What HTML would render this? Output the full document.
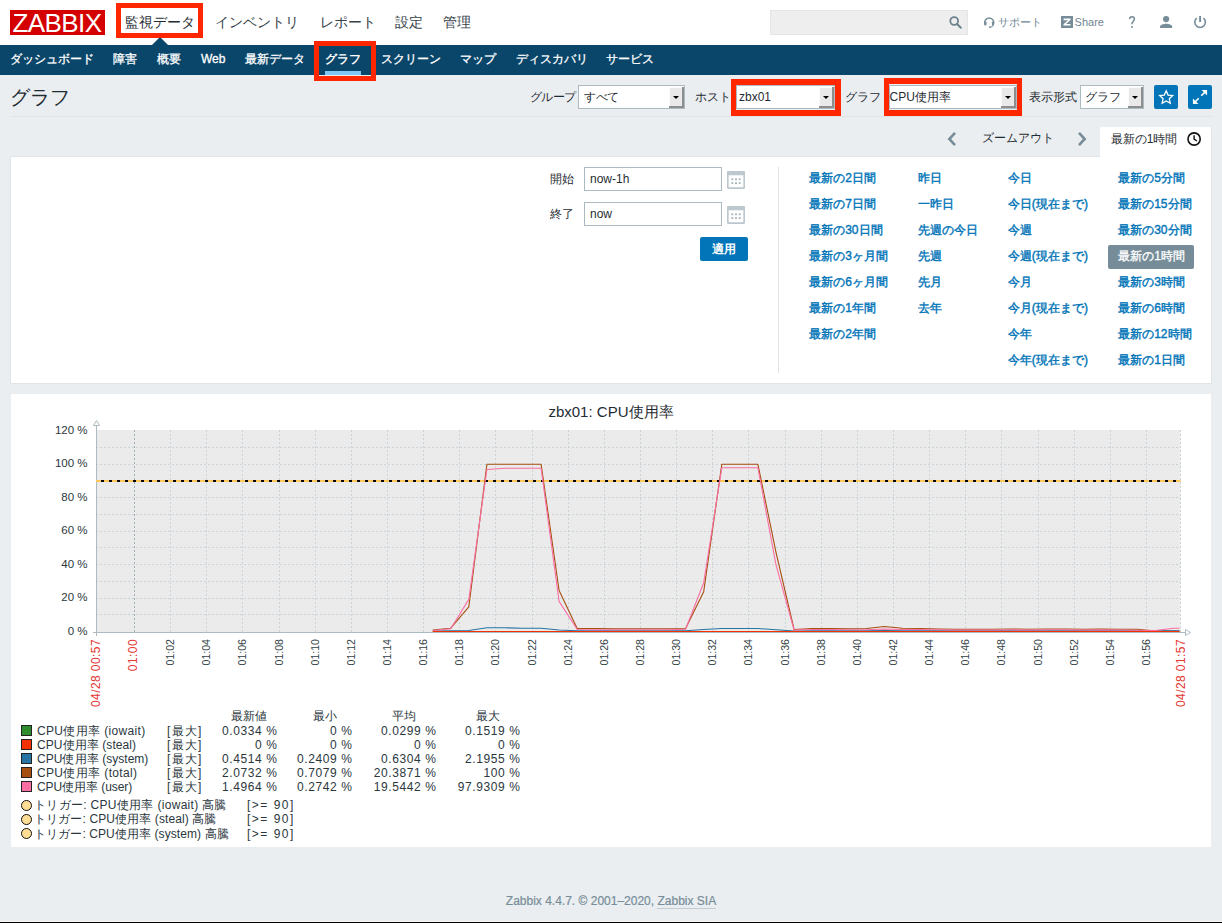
<!DOCTYPE html>
<html lang="ja"><head><meta charset="utf-8"><title>Zabbix</title>
<style>
html,body{margin:0;padding:0;}
body{width:1222px;height:923px;overflow:hidden;background:#ebeef0;font-family:"Liberation Sans",sans-serif;position:relative;}
.t{position:absolute;white-space:nowrap;overflow:visible;font-family:"Liberation Sans",sans-serif;}
.a{position:absolute;}
.sel{position:absolute;background:#fff;border:1px solid #acbbc2;box-sizing:border-box;height:24px;}
.sel .btn{position:absolute;right:0;top:1px;bottom:0;width:15px;background:#e9e9e9;box-shadow:inset -2px -2px 0 #8e8e8e, inset 1px 1px 0 #fbfbfb;}
.sel .btn:after{content:"";position:absolute;left:3.5px;top:8.5px;border:3px solid transparent;border-top:3.5px solid #000;}
.red{position:absolute;border:4px solid #ff2600;box-sizing:border-box;}
.inp{position:absolute;background:#fff;border:1px solid #acbbc2;box-sizing:border-box;height:24px;width:138px;}
</style></head><body>

<div class="a" style="left:0;top:0;width:1222px;height:45px;background:#fff;"></div>
<div class="a" style="left:10px;top:10px;width:95px;height:25px;background:#d40000;"></div>
<div class="t" style="left:12.4px;top:9.7px;font-size:26px;line-height:27px;height:27px;color:#fff;letter-spacing:-0.55px;">ZABBIX</div>
<div class="t" style="left:125px;width:70.3px;text-align:justify;text-align-last:justify;top:12px;font-size:14px;line-height:20px;height:20px;color:#1f2c33;">監視データ</div>
<div class="t" style="left:215px;width:84.3px;text-align:justify;text-align-last:justify;top:12px;font-size:14px;line-height:20px;height:20px;color:#36424a;">インベントリ</div>
<div class="t" style="left:320px;width:56.3px;text-align:justify;text-align-last:justify;top:12px;font-size:14px;line-height:20px;height:20px;color:#36424a;">レポート</div>
<div class="t" style="left:395px;width:28.3px;text-align:justify;text-align-last:justify;top:12px;font-size:14px;line-height:20px;height:20px;color:#36424a;">設定</div>
<div class="t" style="left:443px;width:28.3px;text-align:justify;text-align-last:justify;top:12px;font-size:14px;line-height:20px;height:20px;color:#36424a;">管理</div>
<div class="a" style="left:770px;top:10px;width:198px;height:25px;background:#eeeeee;border:1px solid #e5e5e5;box-sizing:border-box;"></div>
<svg class="a" style="left:947px;top:14px" width="18" height="18" viewBox="0 0 18 18"><circle cx="7.2" cy="7" r="3.9" fill="none" stroke="#6c828e" stroke-width="1.8"/><path d="M10 10 L13.8 13.8" stroke="#6c828e" stroke-width="2" stroke-linecap="round"/></svg>
<svg class="a" style="left:982px;top:14px" width="16" height="16" viewBox="0 0 16 16"><path d="M3.1 10.6 A4.6 4.6 0 1 1 11.3 10.6" fill="none" stroke="#768d99" stroke-width="1.5"/><rect x="2.3" y="7.4" width="2.2" height="4.1" rx="0.9" fill="#768d99"/><rect x="9.9" y="7.4" width="2.2" height="4.1" rx="0.9" fill="#768d99"/><path d="M11.4 11 Q10.8 13.2 8.2 13.2" fill="none" stroke="#768d99" stroke-width="1"/><circle cx="7.9" cy="13.2" r="0.9" fill="#768d99"/></svg>
<div class="t" style="left:997.8px;width:44.3px;text-align:justify;text-align-last:justify;top:14px;font-size:11px;line-height:16px;height:16px;color:#6f8591;">サポート</div>
<svg class="a" style="left:1061px;top:16px" width="12" height="12" viewBox="0 0 12 12"><rect width="12" height="12" fill="#768d99"/><path d="M2.6 2.6 H9.5 V4 L5 8 H9.5 V9.6 H2.5 V8.2 L7 4.2 H2.6 Z" fill="#fff"/></svg>
<div class="t" style="left:1074.6px;top:14px;font-size:11px;line-height:16px;height:16px;color:#6f8591;">Share</div>
<svg class="a" style="left:1125px;top:13px" width="14" height="18" viewBox="0 0 14 18"><path d="M4.6 6.3 C4.6 4.4 5.9 3.7 7 3.7 C8.4 3.7 9.4 4.7 9.4 6 C9.4 8 6.9 8.6 6.9 11.3" fill="none" stroke="#768d99" stroke-width="1.5"/><circle cx="6.9" cy="13.9" r="1" fill="#768d99"/></svg>
<svg class="a" style="left:1157px;top:13px" width="18" height="18" viewBox="0 0 18 18"><circle cx="9.1" cy="6.1" r="3.1" fill="#768d99"/><path d="M3 14.9 V13.7 C3 11.8 6.5 10.8 9.1 10.8 C11.7 10.8 15.2 11.8 15.2 13.7 V14.9 Z" fill="#768d99"/></svg>
<svg class="a" style="left:1191px;top:13px" width="18" height="18" viewBox="0 0 18 18"><path d="M5.7 5.1 A5.3 5.3 0 1 0 12.5 5.1" fill="none" stroke="#768d99" stroke-width="1.6"/><path d="M9.1 3 V9" stroke="#768d99" stroke-width="1.9"/></svg>
<div class="a" style="left:0;top:45px;width:1222px;height:30px;background:#0a466a;"></div>
<div class="a" style="left:152px;top:37px;width:0;height:0;border-left:8px solid transparent;border-right:8px solid transparent;border-bottom:8px solid #0a466a;"></div>
<div class="t" style="left:10px;width:84.3px;text-align:justify;text-align-last:justify;top:50px;font-size:12px;line-height:18px;height:18px;color:#fff;-webkit-text-stroke:0.3px #fff;">ダッシュボード</div>
<div class="t" style="left:113px;width:24.3px;text-align:justify;text-align-last:justify;top:50px;font-size:12px;line-height:18px;height:18px;color:#fff;-webkit-text-stroke:0.3px #fff;">障害</div>
<div class="t" style="left:157px;width:24.3px;text-align:justify;text-align-last:justify;top:50px;font-size:12px;line-height:18px;height:18px;color:#fff;-webkit-text-stroke:0.3px #fff;">概要</div>
<div class="t" style="left:201px;top:50px;font-size:12px;line-height:18px;height:18px;color:#fff;-webkit-text-stroke:0.3px #fff;">Web</div>
<div class="t" style="left:245px;width:60.3px;text-align:justify;text-align-last:justify;top:50px;font-size:12px;line-height:18px;height:18px;color:#fff;-webkit-text-stroke:0.3px #fff;">最新データ</div>
<div class="t" style="left:325px;width:36.3px;text-align:justify;text-align-last:justify;top:50px;font-size:12px;line-height:18px;height:18px;color:#fff;font-weight:bold;">グラフ</div>
<div class="t" style="left:381px;width:60.3px;text-align:justify;text-align-last:justify;top:50px;font-size:12px;line-height:18px;height:18px;color:#fff;-webkit-text-stroke:0.3px #fff;">スクリーン</div>
<div class="t" style="left:460px;width:36.3px;text-align:justify;text-align-last:justify;top:50px;font-size:12px;line-height:18px;height:18px;color:#fff;-webkit-text-stroke:0.3px #fff;">マップ</div>
<div class="t" style="left:516px;width:72.3px;text-align:justify;text-align-last:justify;top:50px;font-size:12px;line-height:18px;height:18px;color:#fff;-webkit-text-stroke:0.3px #fff;">ディスカバリ</div>
<div class="t" style="left:606px;width:48.3px;text-align:justify;text-align-last:justify;top:50px;font-size:12px;line-height:18px;height:18px;color:#fff;-webkit-text-stroke:0.3px #fff;">サービス</div>
<div class="a" style="left:325px;top:71px;width:36px;height:4px;background:#7fc8f6;"></div>
<div class="t" style="left:10px;width:60.3px;text-align:justify;text-align-last:justify;top:82px;font-size:20.3px;line-height:30px;height:30px;color:#1f2c33;">グラフ</div>
<div class="a" style="left:10px;top:116px;width:1202px;height:1px;background:#dfe4e7;"></div>
<div class="t" style="left:530px;width:45.1px;text-align:justify;text-align-last:justify;top:88px;font-size:12px;line-height:18px;height:18px;color:#1f2c33;letter-spacing:-0.8px;">グループ</div>
<div class="sel" style="left:578px;top:85px;width:107px;"><div class="btn"></div></div>
<div class="t" style="left:584px;width:34.5px;text-align:justify;text-align-last:justify;top:88px;font-size:12px;line-height:18px;height:18px;color:#1f2c33;letter-spacing:-0.6px;">すべて</div>
<div class="t" style="left:695px;width:36.3px;text-align:justify;text-align-last:justify;top:88px;font-size:12px;line-height:18px;height:18px;color:#1f2c33;">ホスト</div>
<div class="sel" style="left:736px;top:85px;width:99px;"><div class="btn"></div></div>
<div class="t" style="left:739px;top:88px;font-size:12px;line-height:18px;height:18px;color:#1f2c33;">zbx01</div>
<div class="t" style="left:845px;width:36.3px;text-align:justify;text-align-last:justify;top:88px;font-size:12px;line-height:18px;height:18px;color:#1f2c33;">グラフ</div>
<div class="sel" style="left:889px;top:85px;width:128px;"><div class="btn"></div></div>
<div class="t" style="left:889.5px;width:61.6px;text-align:justify;text-align-last:justify;top:88px;font-size:12px;line-height:18px;height:18px;color:#1f2c33;">CPU使用率</div>
<div class="t" style="left:1029px;width:48.3px;text-align:justify;text-align-last:justify;top:88px;font-size:12px;line-height:18px;height:18px;color:#1f2c33;">表示形式</div>
<div class="sel" style="left:1080px;top:85px;width:64px;"><div class="btn"></div></div>
<div class="t" style="left:1085px;width:36.3px;text-align:justify;text-align-last:justify;top:88px;font-size:12px;line-height:18px;height:18px;color:#1f2c33;">グラフ</div>
<div class="a" style="left:1154px;top:85px;width:24px;height:24px;background:#0275b8;border-radius:2px;"></div>
<svg class="a" style="left:1154px;top:85px" width="24" height="24" viewBox="0 0 24 24"><path d="M12.20 5.80 L14.11 10.07 L18.76 10.57 L15.29 13.70 L16.26 18.28 L12.20 15.95 L8.14 18.28 L9.11 13.70 L5.64 10.57 L10.29 10.07 Z" fill="none" stroke="#fff" stroke-width="1.25" stroke-linejoin="miter"/></svg>
<div class="a" style="left:1188px;top:85px;width:24px;height:24px;background:#0275b8;border-radius:2px;"></div>
<svg class="a" style="left:1188px;top:85px" width="24" height="24" viewBox="0 0 24 24"><path d="M13.6 5 H19.1 V10.5 Z M10.4 19.1 H4.9 V13.6 Z" fill="#fff"/><path d="M17.2 6.9 L13.3 10.8 M6.8 17.2 L10.7 13.3" stroke="#fff" stroke-width="1.6"/></svg>
<div class="a" style="left:1100px;top:127px;width:112px;height:30px;background:#fff;border-right:1px solid #dfe4e7;border-radius:2px 2px 0 0;box-sizing:border-box;"></div>
<div class="t" style="left:1110.5px;width:67.0px;text-align:justify;text-align-last:justify;top:130px;font-size:12px;line-height:18px;height:18px;color:#1f2c33;">最新の1時間</div>
<svg class="a" style="left:1186px;top:131px" width="16" height="16" viewBox="0 0 16 16"><circle cx="8.1" cy="8" r="6.1" fill="none" stroke="#111" stroke-width="1.6"/><path d="M8.1 4.2 V8.2 L11 10" fill="none" stroke="#111" stroke-width="1.4"/></svg>
<div class="t" style="left:982px;width:72.3px;text-align:justify;text-align-last:justify;top:129px;font-size:12px;line-height:18px;height:18px;color:#1f2c33;">ズームアウト</div>
<svg class="a" style="left:946px;top:131px" width="12" height="16" viewBox="0 0 12 16"><path d="M9 1.8 L3.3 8 L9 14.2" fill="none" stroke="#768d99" stroke-width="2.6"/></svg>
<svg class="a" style="left:1076px;top:131px" width="12" height="16" viewBox="0 0 12 16"><path d="M3 1.8 L8.7 8 L3 14.2" fill="none" stroke="#768d99" stroke-width="2.6"/></svg>
<div class="a" style="left:10px;top:156px;width:1202px;height:228px;background:#fff;border:1px solid #dfe4e7;box-sizing:border-box;"></div>
<div class="a" style="left:1100px;top:155px;width:111px;height:3px;background:#fff;"></div>
<div class="t" style="left:550px;width:24.3px;text-align:justify;text-align-last:justify;top:170px;font-size:12px;line-height:18px;height:18px;color:#1f2c33;">開始</div>
<div class="t" style="left:550px;width:24.3px;text-align:justify;text-align-last:justify;top:205px;font-size:12px;line-height:18px;height:18px;color:#1f2c33;">終了</div>
<div class="inp" style="left:584px;top:167px;"></div>
<div class="inp" style="left:584px;top:202px;"></div>
<div class="t" style="left:590px;top:170px;font-size:12px;line-height:18px;height:18px;color:#1f2c33;">now-1h</div>
<div class="t" style="left:590px;top:205px;font-size:12px;line-height:18px;height:18px;color:#1f2c33;">now</div>
<svg class="a" style="left:727px;top:171px" width="18" height="18" viewBox="0 0 18 18"><rect x="0.75" y="0.75" width="16.5" height="16.5" rx="1.2" fill="#fff" stroke="#bcc8ce" stroke-width="1.8"/><rect x="0.3" y="0.3" width="17.4" height="4" rx="1" fill="#bcc8ce"/><rect x="4.35" y="7.3500000000000005" width="1.9" height="1.9" fill="#a9b7bf"/><rect x="8.05" y="7.3500000000000005" width="1.9" height="1.9" fill="#a9b7bf"/><rect x="11.75" y="7.3500000000000005" width="1.9" height="1.9" fill="#a9b7bf"/><rect x="4.35" y="11.15" width="1.9" height="1.9" fill="#a9b7bf"/><rect x="8.05" y="11.15" width="1.9" height="1.9" fill="#a9b7bf"/><rect x="11.75" y="11.15" width="1.9" height="1.9" fill="#a9b7bf"/></svg>
<svg class="a" style="left:727px;top:206px" width="18" height="18" viewBox="0 0 18 18"><rect x="0.75" y="0.75" width="16.5" height="16.5" rx="1.2" fill="#fff" stroke="#bcc8ce" stroke-width="1.8"/><rect x="0.3" y="0.3" width="17.4" height="4" rx="1" fill="#bcc8ce"/><rect x="4.35" y="7.3500000000000005" width="1.9" height="1.9" fill="#a9b7bf"/><rect x="8.05" y="7.3500000000000005" width="1.9" height="1.9" fill="#a9b7bf"/><rect x="11.75" y="7.3500000000000005" width="1.9" height="1.9" fill="#a9b7bf"/><rect x="4.35" y="11.15" width="1.9" height="1.9" fill="#a9b7bf"/><rect x="8.05" y="11.15" width="1.9" height="1.9" fill="#a9b7bf"/><rect x="11.75" y="11.15" width="1.9" height="1.9" fill="#a9b7bf"/></svg>
<div class="a" style="left:700px;top:237px;width:48px;height:24px;background:#0275b8;border-radius:2px;"></div>
<div class="t" style="left:711.9px;width:24.3px;text-align:justify;text-align-last:justify;top:240px;font-size:12px;line-height:18px;height:18px;color:#fff;font-weight:bold;">適用</div>
<div class="a" style="left:778px;top:167px;width:1px;height:206px;background:#dfe4e7;"></div>
<div class="t" style="left:809px;width:67.0px;text-align:justify;text-align-last:justify;top:169px;font-size:12px;line-height:18px;height:18px;color:#0275b8;-webkit-text-stroke:0.4px #0275b8;">最新の2日間</div>
<div class="t" style="left:809px;width:67.0px;text-align:justify;text-align-last:justify;top:195px;font-size:12px;line-height:18px;height:18px;color:#0275b8;-webkit-text-stroke:0.4px #0275b8;">最新の7日間</div>
<div class="t" style="left:809px;width:73.7px;text-align:justify;text-align-last:justify;top:221px;font-size:12px;line-height:18px;height:18px;color:#0275b8;-webkit-text-stroke:0.4px #0275b8;">最新の30日間</div>
<div class="t" style="left:809px;width:79.0px;text-align:justify;text-align-last:justify;top:247px;font-size:12px;line-height:18px;height:18px;color:#0275b8;-webkit-text-stroke:0.4px #0275b8;">最新の3ヶ月間</div>
<div class="t" style="left:809px;width:79.0px;text-align:justify;text-align-last:justify;top:273px;font-size:12px;line-height:18px;height:18px;color:#0275b8;-webkit-text-stroke:0.4px #0275b8;">最新の6ヶ月間</div>
<div class="t" style="left:809px;width:67.0px;text-align:justify;text-align-last:justify;top:299px;font-size:12px;line-height:18px;height:18px;color:#0275b8;-webkit-text-stroke:0.4px #0275b8;">最新の1年間</div>
<div class="t" style="left:809px;width:67.0px;text-align:justify;text-align-last:justify;top:325px;font-size:12px;line-height:18px;height:18px;color:#0275b8;-webkit-text-stroke:0.4px #0275b8;">最新の2年間</div>
<div class="t" style="left:918px;width:24.3px;text-align:justify;text-align-last:justify;top:169px;font-size:12px;line-height:18px;height:18px;color:#0275b8;-webkit-text-stroke:0.4px #0275b8;">昨日</div>
<div class="t" style="left:918px;width:36.3px;text-align:justify;text-align-last:justify;top:195px;font-size:12px;line-height:18px;height:18px;color:#0275b8;-webkit-text-stroke:0.4px #0275b8;">一昨日</div>
<div class="t" style="left:918px;width:60.3px;text-align:justify;text-align-last:justify;top:221px;font-size:12px;line-height:18px;height:18px;color:#0275b8;-webkit-text-stroke:0.4px #0275b8;">先週の今日</div>
<div class="t" style="left:918px;width:24.3px;text-align:justify;text-align-last:justify;top:247px;font-size:12px;line-height:18px;height:18px;color:#0275b8;-webkit-text-stroke:0.4px #0275b8;">先週</div>
<div class="t" style="left:918px;width:24.3px;text-align:justify;text-align-last:justify;top:273px;font-size:12px;line-height:18px;height:18px;color:#0275b8;-webkit-text-stroke:0.4px #0275b8;">先月</div>
<div class="t" style="left:918px;width:24.3px;text-align:justify;text-align-last:justify;top:299px;font-size:12px;line-height:18px;height:18px;color:#0275b8;-webkit-text-stroke:0.4px #0275b8;">去年</div>
<div class="t" style="left:1007.7px;width:24.3px;text-align:justify;text-align-last:justify;top:169px;font-size:12px;line-height:18px;height:18px;color:#0275b8;-webkit-text-stroke:0.4px #0275b8;">今日</div>
<div class="t" style="left:1007.7px;width:80.3px;text-align:justify;text-align-last:justify;top:195px;font-size:12px;line-height:18px;height:18px;color:#0275b8;-webkit-text-stroke:0.4px #0275b8;">今日(現在まで)</div>
<div class="t" style="left:1007.7px;width:24.3px;text-align:justify;text-align-last:justify;top:221px;font-size:12px;line-height:18px;height:18px;color:#0275b8;-webkit-text-stroke:0.4px #0275b8;">今週</div>
<div class="t" style="left:1007.7px;width:80.3px;text-align:justify;text-align-last:justify;top:247px;font-size:12px;line-height:18px;height:18px;color:#0275b8;-webkit-text-stroke:0.4px #0275b8;">今週(現在まで)</div>
<div class="t" style="left:1007.7px;width:24.3px;text-align:justify;text-align-last:justify;top:273px;font-size:12px;line-height:18px;height:18px;color:#0275b8;-webkit-text-stroke:0.4px #0275b8;">今月</div>
<div class="t" style="left:1007.7px;width:80.3px;text-align:justify;text-align-last:justify;top:299px;font-size:12px;line-height:18px;height:18px;color:#0275b8;-webkit-text-stroke:0.4px #0275b8;">今月(現在まで)</div>
<div class="t" style="left:1007.7px;width:24.3px;text-align:justify;text-align-last:justify;top:325px;font-size:12px;line-height:18px;height:18px;color:#0275b8;-webkit-text-stroke:0.4px #0275b8;">今年</div>
<div class="t" style="left:1007.7px;width:80.3px;text-align:justify;text-align-last:justify;top:351px;font-size:12px;line-height:18px;height:18px;color:#0275b8;-webkit-text-stroke:0.4px #0275b8;">今年(現在まで)</div>
<div class="t" style="left:1118px;width:67.0px;text-align:justify;text-align-last:justify;top:169px;font-size:12px;line-height:18px;height:18px;color:#0275b8;-webkit-text-stroke:0.4px #0275b8;">最新の5分間</div>
<div class="t" style="left:1118px;width:73.7px;text-align:justify;text-align-last:justify;top:195px;font-size:12px;line-height:18px;height:18px;color:#0275b8;-webkit-text-stroke:0.4px #0275b8;">最新の15分間</div>
<div class="t" style="left:1118px;width:73.7px;text-align:justify;text-align-last:justify;top:221px;font-size:12px;line-height:18px;height:18px;color:#0275b8;-webkit-text-stroke:0.4px #0275b8;">最新の30分間</div>
<div class="a" style="left:1108px;top:245px;width:86px;height:24px;background:#768d99;border-radius:2px;"></div>
<div class="t" style="left:1118px;width:67.0px;text-align:justify;text-align-last:justify;top:247px;font-size:12px;line-height:18px;height:18px;color:#fff;-webkit-text-stroke:0.3px #fff;">最新の1時間</div>
<div class="t" style="left:1118px;width:67.0px;text-align:justify;text-align-last:justify;top:273px;font-size:12px;line-height:18px;height:18px;color:#0275b8;-webkit-text-stroke:0.4px #0275b8;">最新の3時間</div>
<div class="t" style="left:1118px;width:67.0px;text-align:justify;text-align-last:justify;top:299px;font-size:12px;line-height:18px;height:18px;color:#0275b8;-webkit-text-stroke:0.4px #0275b8;">最新の6時間</div>
<div class="t" style="left:1118px;width:73.7px;text-align:justify;text-align-last:justify;top:325px;font-size:12px;line-height:18px;height:18px;color:#0275b8;-webkit-text-stroke:0.4px #0275b8;">最新の12時間</div>
<div class="t" style="left:1118px;width:67.0px;text-align:justify;text-align-last:justify;top:351px;font-size:12px;line-height:18px;height:18px;color:#0275b8;-webkit-text-stroke:0.4px #0275b8;">最新の1日間</div>
<div class="a" style="left:11px;top:394px;width:1200px;height:453px;background:#fff;"></div>
<svg class="a" style="left:0;top:394px" width="1222" height="330" viewBox="0 394 1222 330"><rect x="97.0" y="430" width="1083.5" height="202" fill="#ebebeb"/><line x1="96" y1="614.5" x2="1180.5" y2="614.5" stroke="#c9d3d8" stroke-width="1" stroke-dasharray="2,2"/><line x1="96" y1="598.5" x2="1180.5" y2="598.5" stroke="#c9d3d8" stroke-width="1" stroke-dasharray="2,2"/><line x1="96" y1="581.5" x2="1180.5" y2="581.5" stroke="#c9d3d8" stroke-width="1" stroke-dasharray="2,2"/><line x1="96" y1="564.5" x2="1180.5" y2="564.5" stroke="#c9d3d8" stroke-width="1" stroke-dasharray="2,2"/><line x1="96" y1="547.5" x2="1180.5" y2="547.5" stroke="#c9d3d8" stroke-width="1" stroke-dasharray="2,2"/><line x1="96" y1="531.5" x2="1180.5" y2="531.5" stroke="#c9d3d8" stroke-width="1" stroke-dasharray="2,2"/><line x1="96" y1="514.5" x2="1180.5" y2="514.5" stroke="#c9d3d8" stroke-width="1" stroke-dasharray="2,2"/><line x1="96" y1="497.5" x2="1180.5" y2="497.5" stroke="#c9d3d8" stroke-width="1" stroke-dasharray="2,2"/><line x1="96" y1="481.5" x2="1180.5" y2="481.5" stroke="#c9d3d8" stroke-width="1" stroke-dasharray="2,2"/><line x1="96" y1="464.5" x2="1180.5" y2="464.5" stroke="#c9d3d8" stroke-width="1" stroke-dasharray="2,2"/><line x1="96" y1="447.5" x2="1180.5" y2="447.5" stroke="#c9d3d8" stroke-width="1" stroke-dasharray="2,2"/><line x1="134.5" y1="430" x2="134.5" y2="632" stroke="#9fb0b9" stroke-width="1" stroke-dasharray="2,2"/><line x1="170.5" y1="430" x2="170.5" y2="632" stroke="#c9d3d8" stroke-width="1" stroke-dasharray="2,2"/><line x1="206.5" y1="430" x2="206.5" y2="632" stroke="#c9d3d8" stroke-width="1" stroke-dasharray="2,2"/><line x1="242.5" y1="430" x2="242.5" y2="632" stroke="#c9d3d8" stroke-width="1" stroke-dasharray="2,2"/><line x1="279.5" y1="430" x2="279.5" y2="632" stroke="#c9d3d8" stroke-width="1" stroke-dasharray="2,2"/><line x1="315.5" y1="430" x2="315.5" y2="632" stroke="#c9d3d8" stroke-width="1" stroke-dasharray="2,2"/><line x1="351.5" y1="430" x2="351.5" y2="632" stroke="#c9d3d8" stroke-width="1" stroke-dasharray="2,2"/><line x1="387.5" y1="430" x2="387.5" y2="632" stroke="#c9d3d8" stroke-width="1" stroke-dasharray="2,2"/><line x1="423.5" y1="430" x2="423.5" y2="632" stroke="#c9d3d8" stroke-width="1" stroke-dasharray="2,2"/><line x1="459.5" y1="430" x2="459.5" y2="632" stroke="#c9d3d8" stroke-width="1" stroke-dasharray="2,2"/><line x1="495.5" y1="430" x2="495.5" y2="632" stroke="#c9d3d8" stroke-width="1" stroke-dasharray="2,2"/><line x1="532.5" y1="430" x2="532.5" y2="632" stroke="#c9d3d8" stroke-width="1" stroke-dasharray="2,2"/><line x1="568.5" y1="430" x2="568.5" y2="632" stroke="#c9d3d8" stroke-width="1" stroke-dasharray="2,2"/><line x1="604.5" y1="430" x2="604.5" y2="632" stroke="#c9d3d8" stroke-width="1" stroke-dasharray="2,2"/><line x1="640.5" y1="430" x2="640.5" y2="632" stroke="#c9d3d8" stroke-width="1" stroke-dasharray="2,2"/><line x1="676.5" y1="430" x2="676.5" y2="632" stroke="#c9d3d8" stroke-width="1" stroke-dasharray="2,2"/><line x1="712.5" y1="430" x2="712.5" y2="632" stroke="#c9d3d8" stroke-width="1" stroke-dasharray="2,2"/><line x1="748.5" y1="430" x2="748.5" y2="632" stroke="#c9d3d8" stroke-width="1" stroke-dasharray="2,2"/><line x1="785.5" y1="430" x2="785.5" y2="632" stroke="#c9d3d8" stroke-width="1" stroke-dasharray="2,2"/><line x1="821.5" y1="430" x2="821.5" y2="632" stroke="#c9d3d8" stroke-width="1" stroke-dasharray="2,2"/><line x1="857.5" y1="430" x2="857.5" y2="632" stroke="#c9d3d8" stroke-width="1" stroke-dasharray="2,2"/><line x1="893.5" y1="430" x2="893.5" y2="632" stroke="#c9d3d8" stroke-width="1" stroke-dasharray="2,2"/><line x1="929.5" y1="430" x2="929.5" y2="632" stroke="#c9d3d8" stroke-width="1" stroke-dasharray="2,2"/><line x1="965.5" y1="430" x2="965.5" y2="632" stroke="#c9d3d8" stroke-width="1" stroke-dasharray="2,2"/><line x1="1001.5" y1="430" x2="1001.5" y2="632" stroke="#c9d3d8" stroke-width="1" stroke-dasharray="2,2"/><line x1="1038.5" y1="430" x2="1038.5" y2="632" stroke="#c9d3d8" stroke-width="1" stroke-dasharray="2,2"/><line x1="1074.5" y1="430" x2="1074.5" y2="632" stroke="#c9d3d8" stroke-width="1" stroke-dasharray="2,2"/><line x1="1110.5" y1="430" x2="1110.5" y2="632" stroke="#c9d3d8" stroke-width="1" stroke-dasharray="2,2"/><line x1="1146.5" y1="430" x2="1146.5" y2="632" stroke="#c9d3d8" stroke-width="1" stroke-dasharray="2,2"/><line x1="1180.5" y1="430" x2="1180.5" y2="632" stroke="#c9d3d8" stroke-width="1" stroke-dasharray="2,2"/><line x1="96.5" y1="425" x2="96.5" y2="636" stroke="#acbbc2" stroke-width="1"/><line x1="93" y1="632.5" x2="1186" y2="632.5" stroke="#acbbc2" stroke-width="1"/><path d="M93.5 425.5 L96.5 420.5 L99.5 425.5 Z" fill="#fff" stroke="#acbbc2" stroke-width="1"/><path d="M1185.5 629.5 L1190.5 632.5 L1185.5 635.5 Z" fill="#fff" stroke="#acbbc2" stroke-width="1"/><line x1="96" y1="481.0" x2="1180.5" y2="481.0" stroke="#ffc859" stroke-width="2"/><line x1="101" y1="481.0" x2="1180.5" y2="481.0" stroke="#000" stroke-width="2" stroke-dasharray="3,5"/><g><polyline points="432.7,630.0 450.7,628.2 468.8,606.9 486.9,464.3 504.9,464.3 523.0,464.3 541.1,464.3 559.1,590.5 577.2,628.5 595.3,628.5 613.4,628.7 631.4,628.7 649.5,628.7 667.6,628.7 685.6,628.5 703.7,591.7 721.8,464.3 739.8,464.3 757.9,464.3 776.0,552.4 794.1,629.5 812.1,628.5 830.2,628.5 848.3,628.7 866.3,628.5 884.4,626.5 902.5,628.3 920.5,628.5 938.6,629.0 956.7,629.3 974.8,629.2 992.8,629.2 1010.9,629.0 1029.0,629.2 1047.0,629.0 1065.1,629.0 1083.2,629.2 1101.2,629.0 1119.3,629.2 1137.4,629.3 1155.5,631.0 1173.5,631.0 1179.5,631.0" fill="none" stroke="#a54f10" stroke-width="1.1" stroke-linejoin="round"/><polyline points="432.7,631.0 450.7,630.8 468.8,630.5 486.9,627.8 504.9,627.8 523.0,628.2 541.1,628.2 559.1,630.0 577.2,630.7 595.3,630.7 613.4,630.7 631.4,630.7 649.5,630.7 667.6,630.7 685.6,630.7 703.7,629.5 721.8,628.5 739.8,628.5 757.9,628.5 776.0,629.8 794.1,631.0 812.1,630.7 830.2,630.7 848.3,630.7 866.3,630.7 884.4,630.5 902.5,630.7 920.5,630.7 938.6,630.8 956.7,630.9 974.8,630.8 992.8,630.8 1010.9,630.8 1029.0,630.8 1047.0,630.8 1065.1,630.8 1083.2,630.8 1101.2,630.8 1119.3,630.8 1137.4,630.8 1155.5,630.8 1173.5,630.7 1179.5,630.7" fill="none" stroke="#2774a4" stroke-width="1.1" stroke-linejoin="round"/><polyline points="432.7,630.5 450.7,628.7 468.8,599.4 486.9,469.5 504.9,468.3 523.0,468.3 541.1,468.3 559.1,601.4 577.2,629.5 595.3,629.7 613.4,629.7 631.4,629.7 649.5,629.7 667.6,629.7 685.6,629.3 703.7,582.7 721.8,467.8 739.8,467.8 757.9,467.8 776.0,564.8 794.1,630.0 812.1,629.5 830.2,629.5 848.3,629.7 866.3,629.7 884.4,629.0 902.5,629.5 920.5,629.5 938.6,629.8 956.7,630.0 974.8,630.0 992.8,630.0 1010.9,629.8 1029.0,630.0 1047.0,629.8 1065.1,629.8 1083.2,630.0 1101.2,629.8 1119.3,630.0 1137.4,630.2 1155.5,630.5 1173.5,628.3 1179.5,628.3" fill="none" stroke="#fc6ea3" stroke-width="1.1" stroke-linejoin="round"/><line x1="432.7" y1="631.5" x2="1179.5" y2="631.5" stroke="#f63100" stroke-width="1.2"/></g></svg>
<div class="t" style="left:548.4px;width:125.3px;text-align:justify;text-align-last:justify;top:402px;font-size:15px;line-height:20px;height:20px;color:#1f2c33;">zbx01: CPU使用率</div>
<div class="t" style="left:27.5px;top:623px;font-size:11.5px;line-height:16px;height:16px;color:#2b373d;width:60px;text-align:right;">0 %</div>
<div class="t" style="left:27.5px;top:589px;font-size:11.5px;line-height:16px;height:16px;color:#2b373d;width:60px;text-align:right;">20 %</div>
<div class="t" style="left:27.5px;top:556px;font-size:11.5px;line-height:16px;height:16px;color:#2b373d;width:60px;text-align:right;">40 %</div>
<div class="t" style="left:27.5px;top:522px;font-size:11.5px;line-height:16px;height:16px;color:#2b373d;width:60px;text-align:right;">60 %</div>
<div class="t" style="left:27.5px;top:489px;font-size:11.5px;line-height:16px;height:16px;color:#2b373d;width:60px;text-align:right;">80 %</div>
<div class="t" style="left:27.5px;top:455px;font-size:11.5px;line-height:16px;height:16px;color:#2b373d;width:60px;text-align:right;">100 %</div>
<div class="t" style="left:27.5px;top:422px;font-size:11.5px;line-height:16px;height:16px;color:#2b373d;width:60px;text-align:right;">120 %</div>
<div class="t" style="left:88.2px;top:639.3px;width:16px;height:80px;"><div class="t" style="left:0;top:0;transform-origin:0 0;transform:translate(0px,80px) rotate(-90deg);width:80px;height:16px;line-height:16px;text-align:right;font-size:12px;color:#e33734;letter-spacing:0.42px;">04/28 00:57</div></div>
<div class="t" style="left:124.80000000000001px;top:639.3px;width:16px;height:80px;"><div class="t" style="left:0;top:0;transform-origin:0 0;transform:translate(0px,80px) rotate(-90deg);width:80px;height:16px;line-height:16px;text-align:right;font-size:12px;color:#e33734;letter-spacing:0.42px;">01:00</div></div>
<div class="t" style="left:161.5px;top:639.2px;width:16px;height:80px;"><div class="t" style="left:0;top:0;transform-origin:0 0;transform:translate(0px,80px) rotate(-90deg);width:80px;height:16px;line-height:16px;text-align:right;font-size:10.6px;color:#333f45;letter-spacing:0px;">01:02</div></div>
<div class="t" style="left:197.5px;top:639.2px;width:16px;height:80px;"><div class="t" style="left:0;top:0;transform-origin:0 0;transform:translate(0px,80px) rotate(-90deg);width:80px;height:16px;line-height:16px;text-align:right;font-size:10.6px;color:#333f45;letter-spacing:0px;">01:04</div></div>
<div class="t" style="left:233.5px;top:639.2px;width:16px;height:80px;"><div class="t" style="left:0;top:0;transform-origin:0 0;transform:translate(0px,80px) rotate(-90deg);width:80px;height:16px;line-height:16px;text-align:right;font-size:10.6px;color:#333f45;letter-spacing:0px;">01:06</div></div>
<div class="t" style="left:270.5px;top:639.2px;width:16px;height:80px;"><div class="t" style="left:0;top:0;transform-origin:0 0;transform:translate(0px,80px) rotate(-90deg);width:80px;height:16px;line-height:16px;text-align:right;font-size:10.6px;color:#333f45;letter-spacing:0px;">01:08</div></div>
<div class="t" style="left:306.5px;top:639.2px;width:16px;height:80px;"><div class="t" style="left:0;top:0;transform-origin:0 0;transform:translate(0px,80px) rotate(-90deg);width:80px;height:16px;line-height:16px;text-align:right;font-size:10.6px;color:#333f45;letter-spacing:0px;">01:10</div></div>
<div class="t" style="left:342.5px;top:639.2px;width:16px;height:80px;"><div class="t" style="left:0;top:0;transform-origin:0 0;transform:translate(0px,80px) rotate(-90deg);width:80px;height:16px;line-height:16px;text-align:right;font-size:10.6px;color:#333f45;letter-spacing:0px;">01:12</div></div>
<div class="t" style="left:378.5px;top:639.2px;width:16px;height:80px;"><div class="t" style="left:0;top:0;transform-origin:0 0;transform:translate(0px,80px) rotate(-90deg);width:80px;height:16px;line-height:16px;text-align:right;font-size:10.6px;color:#333f45;letter-spacing:0px;">01:14</div></div>
<div class="t" style="left:414.5px;top:639.2px;width:16px;height:80px;"><div class="t" style="left:0;top:0;transform-origin:0 0;transform:translate(0px,80px) rotate(-90deg);width:80px;height:16px;line-height:16px;text-align:right;font-size:10.6px;color:#333f45;letter-spacing:0px;">01:16</div></div>
<div class="t" style="left:450.5px;top:639.2px;width:16px;height:80px;"><div class="t" style="left:0;top:0;transform-origin:0 0;transform:translate(0px,80px) rotate(-90deg);width:80px;height:16px;line-height:16px;text-align:right;font-size:10.6px;color:#333f45;letter-spacing:0px;">01:18</div></div>
<div class="t" style="left:486.5px;top:639.2px;width:16px;height:80px;"><div class="t" style="left:0;top:0;transform-origin:0 0;transform:translate(0px,80px) rotate(-90deg);width:80px;height:16px;line-height:16px;text-align:right;font-size:10.6px;color:#333f45;letter-spacing:0px;">01:20</div></div>
<div class="t" style="left:523.5px;top:639.2px;width:16px;height:80px;"><div class="t" style="left:0;top:0;transform-origin:0 0;transform:translate(0px,80px) rotate(-90deg);width:80px;height:16px;line-height:16px;text-align:right;font-size:10.6px;color:#333f45;letter-spacing:0px;">01:22</div></div>
<div class="t" style="left:559.5px;top:639.2px;width:16px;height:80px;"><div class="t" style="left:0;top:0;transform-origin:0 0;transform:translate(0px,80px) rotate(-90deg);width:80px;height:16px;line-height:16px;text-align:right;font-size:10.6px;color:#333f45;letter-spacing:0px;">01:24</div></div>
<div class="t" style="left:595.5px;top:639.2px;width:16px;height:80px;"><div class="t" style="left:0;top:0;transform-origin:0 0;transform:translate(0px,80px) rotate(-90deg);width:80px;height:16px;line-height:16px;text-align:right;font-size:10.6px;color:#333f45;letter-spacing:0px;">01:26</div></div>
<div class="t" style="left:631.5px;top:639.2px;width:16px;height:80px;"><div class="t" style="left:0;top:0;transform-origin:0 0;transform:translate(0px,80px) rotate(-90deg);width:80px;height:16px;line-height:16px;text-align:right;font-size:10.6px;color:#333f45;letter-spacing:0px;">01:28</div></div>
<div class="t" style="left:667.5px;top:639.2px;width:16px;height:80px;"><div class="t" style="left:0;top:0;transform-origin:0 0;transform:translate(0px,80px) rotate(-90deg);width:80px;height:16px;line-height:16px;text-align:right;font-size:10.6px;color:#333f45;letter-spacing:0px;">01:30</div></div>
<div class="t" style="left:703.5px;top:639.2px;width:16px;height:80px;"><div class="t" style="left:0;top:0;transform-origin:0 0;transform:translate(0px,80px) rotate(-90deg);width:80px;height:16px;line-height:16px;text-align:right;font-size:10.6px;color:#333f45;letter-spacing:0px;">01:32</div></div>
<div class="t" style="left:739.5px;top:639.2px;width:16px;height:80px;"><div class="t" style="left:0;top:0;transform-origin:0 0;transform:translate(0px,80px) rotate(-90deg);width:80px;height:16px;line-height:16px;text-align:right;font-size:10.6px;color:#333f45;letter-spacing:0px;">01:34</div></div>
<div class="t" style="left:776.5px;top:639.2px;width:16px;height:80px;"><div class="t" style="left:0;top:0;transform-origin:0 0;transform:translate(0px,80px) rotate(-90deg);width:80px;height:16px;line-height:16px;text-align:right;font-size:10.6px;color:#333f45;letter-spacing:0px;">01:36</div></div>
<div class="t" style="left:812.5px;top:639.2px;width:16px;height:80px;"><div class="t" style="left:0;top:0;transform-origin:0 0;transform:translate(0px,80px) rotate(-90deg);width:80px;height:16px;line-height:16px;text-align:right;font-size:10.6px;color:#333f45;letter-spacing:0px;">01:38</div></div>
<div class="t" style="left:848.5px;top:639.2px;width:16px;height:80px;"><div class="t" style="left:0;top:0;transform-origin:0 0;transform:translate(0px,80px) rotate(-90deg);width:80px;height:16px;line-height:16px;text-align:right;font-size:10.6px;color:#333f45;letter-spacing:0px;">01:40</div></div>
<div class="t" style="left:884.5px;top:639.2px;width:16px;height:80px;"><div class="t" style="left:0;top:0;transform-origin:0 0;transform:translate(0px,80px) rotate(-90deg);width:80px;height:16px;line-height:16px;text-align:right;font-size:10.6px;color:#333f45;letter-spacing:0px;">01:42</div></div>
<div class="t" style="left:920.5px;top:639.2px;width:16px;height:80px;"><div class="t" style="left:0;top:0;transform-origin:0 0;transform:translate(0px,80px) rotate(-90deg);width:80px;height:16px;line-height:16px;text-align:right;font-size:10.6px;color:#333f45;letter-spacing:0px;">01:44</div></div>
<div class="t" style="left:956.5px;top:639.2px;width:16px;height:80px;"><div class="t" style="left:0;top:0;transform-origin:0 0;transform:translate(0px,80px) rotate(-90deg);width:80px;height:16px;line-height:16px;text-align:right;font-size:10.6px;color:#333f45;letter-spacing:0px;">01:46</div></div>
<div class="t" style="left:992.5px;top:639.2px;width:16px;height:80px;"><div class="t" style="left:0;top:0;transform-origin:0 0;transform:translate(0px,80px) rotate(-90deg);width:80px;height:16px;line-height:16px;text-align:right;font-size:10.6px;color:#333f45;letter-spacing:0px;">01:48</div></div>
<div class="t" style="left:1029.5px;top:639.2px;width:16px;height:80px;"><div class="t" style="left:0;top:0;transform-origin:0 0;transform:translate(0px,80px) rotate(-90deg);width:80px;height:16px;line-height:16px;text-align:right;font-size:10.6px;color:#333f45;letter-spacing:0px;">01:50</div></div>
<div class="t" style="left:1065.5px;top:639.2px;width:16px;height:80px;"><div class="t" style="left:0;top:0;transform-origin:0 0;transform:translate(0px,80px) rotate(-90deg);width:80px;height:16px;line-height:16px;text-align:right;font-size:10.6px;color:#333f45;letter-spacing:0px;">01:52</div></div>
<div class="t" style="left:1101.5px;top:639.2px;width:16px;height:80px;"><div class="t" style="left:0;top:0;transform-origin:0 0;transform:translate(0px,80px) rotate(-90deg);width:80px;height:16px;line-height:16px;text-align:right;font-size:10.6px;color:#333f45;letter-spacing:0px;">01:54</div></div>
<div class="t" style="left:1137.5px;top:639.2px;width:16px;height:80px;"><div class="t" style="left:0;top:0;transform-origin:0 0;transform:translate(0px,80px) rotate(-90deg);width:80px;height:16px;line-height:16px;text-align:right;font-size:10.6px;color:#333f45;letter-spacing:0px;">01:56</div></div>
<div class="t" style="left:1172.8px;top:639.3px;width:16px;height:80px;"><div class="t" style="left:0;top:0;transform-origin:0 0;transform:translate(0px,80px) rotate(-90deg);width:80px;height:16px;line-height:16px;text-align:right;font-size:12px;color:#e33734;letter-spacing:0.42px;">04/28 01:57</div></div>
<div class="t" style="left:231px;width:36.3px;text-align:justify;text-align-last:justify;top:709px;font-size:12px;line-height:15px;height:15px;color:#2b373d;">最新値</div>
<div class="t" style="left:313px;width:24.3px;text-align:justify;text-align-last:justify;top:709px;font-size:12px;line-height:15px;height:15px;color:#2b373d;">最小</div>
<div class="t" style="left:392px;width:24.3px;text-align:justify;text-align-last:justify;top:709px;font-size:12px;line-height:15px;height:15px;color:#2b373d;">平均</div>
<div class="t" style="left:476px;width:24.3px;text-align:justify;text-align-last:justify;top:709px;font-size:12px;line-height:15px;height:15px;color:#2b373d;">最大</div>
<div class="a" style="left:21px;top:725px;width:11px;height:11px;background:#2d8a2d;border:1px solid #222;box-sizing:border-box;"></div>
<div class="t" style="left:37px;width:108.6px;text-align:justify;text-align-last:justify;top:723.5px;font-size:12px;line-height:15px;height:15px;color:#2b373d;letter-spacing:0.33px;">CPU使用率 (iowait)</div>
<div class="t" style="left:167px;width:35.4px;text-align:justify;text-align-last:justify;top:723.5px;font-size:12px;line-height:15px;height:15px;color:#2b373d;letter-spacing:1.1px;">[最大]</div>
<div class="t" style="left:197.6px;top:723.5px;font-size:12px;line-height:15px;height:15px;color:#2b373d;width:80px;text-align:right;letter-spacing:0.6px;">0.0334 %</div>
<div class="t" style="left:272.6px;top:723.5px;font-size:12px;line-height:15px;height:15px;color:#2b373d;width:80px;text-align:right;letter-spacing:0.6px;">0 %</div>
<div class="t" style="left:356.6px;top:723.5px;font-size:12px;line-height:15px;height:15px;color:#2b373d;width:80px;text-align:right;letter-spacing:0.6px;">0.0299 %</div>
<div class="t" style="left:440.6px;top:723.5px;font-size:12px;line-height:15px;height:15px;color:#2b373d;width:80px;text-align:right;letter-spacing:0.6px;">0.1519 %</div>
<div class="a" style="left:21px;top:739px;width:11px;height:11px;background:#f63100;border:1px solid #222;box-sizing:border-box;"></div>
<div class="t" style="left:37px;width:99.0px;text-align:justify;text-align-last:justify;top:737.5px;font-size:12px;line-height:15px;height:15px;color:#2b373d;letter-spacing:0.05px;">CPU使用率 (steal)</div>
<div class="t" style="left:167px;width:35.4px;text-align:justify;text-align-last:justify;top:737.5px;font-size:12px;line-height:15px;height:15px;color:#2b373d;letter-spacing:1.1px;">[最大]</div>
<div class="t" style="left:197.6px;top:737.5px;font-size:12px;line-height:15px;height:15px;color:#2b373d;width:80px;text-align:right;letter-spacing:0.6px;">0 %</div>
<div class="t" style="left:272.6px;top:737.5px;font-size:12px;line-height:15px;height:15px;color:#2b373d;width:80px;text-align:right;letter-spacing:0.6px;">0 %</div>
<div class="t" style="left:356.6px;top:737.5px;font-size:12px;line-height:15px;height:15px;color:#2b373d;width:80px;text-align:right;letter-spacing:0.6px;">0 %</div>
<div class="t" style="left:440.6px;top:737.5px;font-size:12px;line-height:15px;height:15px;color:#2b373d;width:80px;text-align:right;letter-spacing:0.6px;">0 %</div>
<div class="a" style="left:21px;top:753px;width:11px;height:11px;background:#2774a4;border:1px solid #222;box-sizing:border-box;"></div>
<div class="t" style="left:37px;width:111.4px;text-align:justify;text-align-last:justify;top:751.5px;font-size:12px;line-height:15px;height:15px;color:#2b373d;letter-spacing:0.03px;">CPU使用率 (system)</div>
<div class="t" style="left:167px;width:35.4px;text-align:justify;text-align-last:justify;top:751.5px;font-size:12px;line-height:15px;height:15px;color:#2b373d;letter-spacing:1.1px;">[最大]</div>
<div class="t" style="left:197.6px;top:751.5px;font-size:12px;line-height:15px;height:15px;color:#2b373d;width:80px;text-align:right;letter-spacing:0.6px;">0.4514 %</div>
<div class="t" style="left:272.6px;top:751.5px;font-size:12px;line-height:15px;height:15px;color:#2b373d;width:80px;text-align:right;letter-spacing:0.6px;">0.2409 %</div>
<div class="t" style="left:356.6px;top:751.5px;font-size:12px;line-height:15px;height:15px;color:#2b373d;width:80px;text-align:right;letter-spacing:0.6px;">0.6304 %</div>
<div class="t" style="left:440.6px;top:751.5px;font-size:12px;line-height:15px;height:15px;color:#2b373d;width:80px;text-align:right;letter-spacing:0.6px;">2.1955 %</div>
<div class="a" style="left:21px;top:767px;width:11px;height:11px;background:#a54f10;border:1px solid #222;box-sizing:border-box;"></div>
<div class="t" style="left:37px;width:100.3px;text-align:justify;text-align-last:justify;top:765.5px;font-size:12px;line-height:15px;height:15px;color:#2b373d;letter-spacing:0.33px;">CPU使用率 (total)</div>
<div class="t" style="left:167px;width:35.4px;text-align:justify;text-align-last:justify;top:765.5px;font-size:12px;line-height:15px;height:15px;color:#2b373d;letter-spacing:1.1px;">[最大]</div>
<div class="t" style="left:197.6px;top:765.5px;font-size:12px;line-height:15px;height:15px;color:#2b373d;width:80px;text-align:right;letter-spacing:0.6px;">2.0732 %</div>
<div class="t" style="left:272.6px;top:765.5px;font-size:12px;line-height:15px;height:15px;color:#2b373d;width:80px;text-align:right;letter-spacing:0.6px;">0.7079 %</div>
<div class="t" style="left:356.6px;top:765.5px;font-size:12px;line-height:15px;height:15px;color:#2b373d;width:80px;text-align:right;letter-spacing:0.6px;">20.3871 %</div>
<div class="t" style="left:440.6px;top:765.5px;font-size:12px;line-height:15px;height:15px;color:#2b373d;width:80px;text-align:right;letter-spacing:0.6px;">100 %</div>
<div class="a" style="left:21px;top:781px;width:11px;height:11px;background:#fc6ea3;border:1px solid #222;box-sizing:border-box;"></div>
<div class="t" style="left:37px;width:95.1px;text-align:justify;text-align-last:justify;top:779.5px;font-size:12px;line-height:15px;height:15px;color:#2b373d;letter-spacing:-0.09px;">CPU使用率 (user)</div>
<div class="t" style="left:167px;width:35.4px;text-align:justify;text-align-last:justify;top:779.5px;font-size:12px;line-height:15px;height:15px;color:#2b373d;letter-spacing:1.1px;">[最大]</div>
<div class="t" style="left:197.6px;top:779.5px;font-size:12px;line-height:15px;height:15px;color:#2b373d;width:80px;text-align:right;letter-spacing:0.6px;">1.4964 %</div>
<div class="t" style="left:272.6px;top:779.5px;font-size:12px;line-height:15px;height:15px;color:#2b373d;width:80px;text-align:right;letter-spacing:0.6px;">0.2742 %</div>
<div class="t" style="left:356.6px;top:779.5px;font-size:12px;line-height:15px;height:15px;color:#2b373d;width:80px;text-align:right;letter-spacing:0.6px;">19.5442 %</div>
<div class="t" style="left:440.6px;top:779.5px;font-size:12px;line-height:15px;height:15px;color:#2b373d;width:80px;text-align:right;letter-spacing:0.6px;">97.9309 %</div>
<div class="a" style="left:21px;top:799.5px;width:11px;height:11px;background:#ffdd95;border:1.3px solid #111;border-radius:50%;box-sizing:border-box;"></div>
<div class="t" style="left:34px;width:192.8px;text-align:justify;text-align-last:justify;top:798.0px;font-size:12px;line-height:15px;height:15px;color:#2b373d;letter-spacing:0.3px;">トリガー: CPU使用率 (iowait) 高騰</div>
<div class="t" style="left:247px;top:798.0px;font-size:12px;line-height:15px;height:15px;color:#2b373d;letter-spacing:1.5px;">[&gt;= 90]</div>
<div class="a" style="left:21px;top:813.75px;width:11px;height:11px;background:#ffdd95;border:1.3px solid #111;border-radius:50%;box-sizing:border-box;"></div>
<div class="t" style="left:34px;width:182.6px;text-align:justify;text-align-last:justify;top:812.25px;font-size:12px;line-height:15px;height:15px;color:#2b373d;letter-spacing:0.1px;">トリガー: CPU使用率 (steal) 高騰</div>
<div class="t" style="left:247px;top:812.25px;font-size:12px;line-height:15px;height:15px;color:#2b373d;letter-spacing:1.5px;">[&gt;= 90]</div>
<div class="a" style="left:21px;top:828.0px;width:11px;height:11px;background:#ffdd95;border:1.3px solid #111;border-radius:50%;box-sizing:border-box;"></div>
<div class="t" style="left:34px;width:194.7px;text-align:justify;text-align-last:justify;top:826.5px;font-size:12px;line-height:15px;height:15px;color:#2b373d;letter-spacing:0.07px;">トリガー: CPU使用率 (system) 高騰</div>
<div class="t" style="left:247px;top:826.5px;font-size:12px;line-height:15px;height:15px;color:#2b373d;letter-spacing:1.5px;">[&gt;= 90]</div>
<div class="t" style="left:411px;top:893px;font-size:12px;line-height:17px;height:17px;color:#768d99;width:400px;text-align:center;-webkit-text-stroke:0.2px #768d99;">Zabbix 4.4.7. © 2001–2020, <span style="border-bottom:1px solid #c3ced4;">Zabbix SIA</span></div>
<div class="a" style="left:0;top:921px;width:1222px;height:1px;background:#f7f8f9;"></div>
<div class="a" style="left:0;top:922px;width:1222px;height:1px;background:#000;"></div>
<div class="red" style="left:116px;top:3px;width:87px;height:35px;border-width:5px;"></div>
<div class="red" style="left:314px;top:41px;width:62px;height:40px;border-width:5px;"></div>
<div class="red" style="left:731px;top:79px;width:110px;height:37px;border-width:6px 6px 6px 5px;"></div>
<div class="red" style="left:884px;top:78px;width:138px;height:38px;border-width:6px 5px 6px 5px;"></div>
</body></html>
